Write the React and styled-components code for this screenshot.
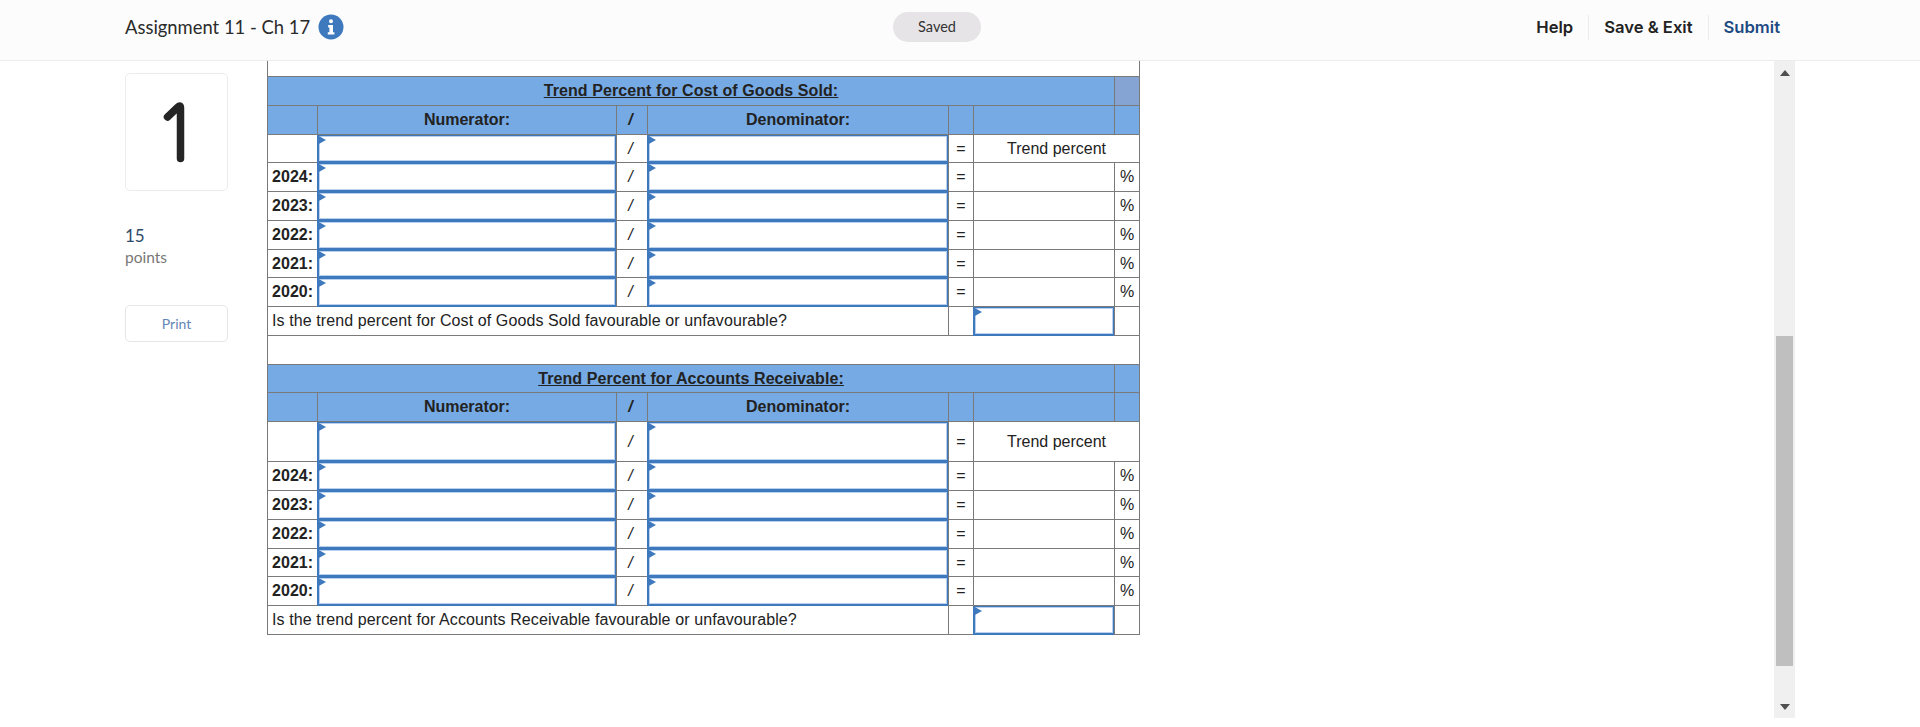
import styled, { createGlobalStyle } from 'styled-components';

const GlobalStyle = createGlobalStyle`
  html, body {
    margin: 0;
    height: 100%;
    background: #fff;
    overflow: hidden;
  }
`;

const Page = styled.div`
  height: 727px;
  display: flex;
  flex-direction: column;
  font-family: Lato, "Open Sans", sans-serif;
  color: #252525;
`;

const Header = styled.header`
  height: 61px;
  box-sizing: border-box;
  flex: none;
  display: flex;
  align-items: center;
  padding: 0 140px 6px 125px;
  background: #fcfcfc;
  border-bottom: 1px solid #ececec;
`;

const TitleGroup = styled.div`
  width: 768px;
  flex: none;
  display: flex;
  align-items: center;
`;

const Actions = styled.nav`
  flex: 1;
  display: flex;
  align-items: center;
  justify-content: flex-end;
`;

const Title = styled.h1`
  margin: 0 8px 0 0;
  font-size: 18.4px;
  font-weight: 400;
  color: #2b2b2b;
`;

const SavedPill = styled.div`
  width: 88px;
  height: 30px;
  border-radius: 15px;
  background: #e6e4e6;
  font-size: 14.5px;
  line-height: 30px;
  text-align: center;
  color: #333;
`;

const HeaderLink = styled.a`
  padding: 0 ${(p) => (p.$primary ? 0 : 15)}px 0 15px;
  height: 25px;
  line-height: 25px;
  font-family: Inter, Lato, sans-serif;
  font-size: 16.6px;
  font-weight: 600;
  color: ${(p) => (p.$primary ? '#1c4a82' : '#222')};
  border-right: ${(p) => (p.$primary ? 'none' : '1px solid #ececec')};
`;

const Body = styled.div`
  flex: 1;
  min-height: 0;
  display: flex;
  padding: 0 125px 9px;
`;

const Sidebar = styled.aside`
  width: 103px;
  flex: none;
  margin-right: 39px;
  padding-top: 12px;
`;

const NumberCard = styled.div`
  height: 116px;
  border: 1px solid #ececec;
  border-radius: 5px;
  display: flex;
  align-items: center;
  justify-content: center;
`;

const Points = styled.div`
  margin-top: 34px;
  font-size: 17px;
  line-height: 22px;
  color: #2f4a68;
`;

const PointsLabel = styled.div`
  font-size: 15.5px;
  line-height: 20px;
  color: #777;
`;

const PrintButton = styled.div`
  margin-top: 38px;
  height: 35px;
  line-height: 35px;
  border: 1px solid #e6e6e6;
  border-radius: 5px;
  text-align: center;
  font-size: 14px;
  color: #5f86b4;
`;

const Content = styled.main`
  flex: 1;
  min-width: 0;
  overflow: hidden;
`;

const Sheet = styled.table`
  width: 873px;
  table-layout: fixed;
  border-collapse: collapse;
  font-family: "Liberation Sans", Arial, sans-serif;
  font-size: 16px;
  color: #222;
`;

const Cell = styled.td`
  border: 1px solid #7a7a7a;
  padding: 0;
  height: ${(p) => p.$h || 29}px;
  box-sizing: border-box;
  text-align: ${(p) => p.$align || 'center'};
  font-weight: ${(p) => (p.$bold ? 700 : 400)};
  background: ${(p) => p.$bg || 'transparent'};
  padding-left: ${(p) => p.$pl || 0}px;
  padding-right: ${(p) => p.$pr || 0}px;
  position: relative;
  white-space: nowrap;
`;

const TopGap = styled.td`
  height: 15px;
  padding: 0;
  border-left: 1px solid #7a7a7a;
  border-right: 1px solid #7a7a7a;
  border-bottom: 1px solid #7a7a7a;
`;

const SectionTitle = styled.span`
  font-weight: 700;
  letter-spacing: 0.08px;
  text-decoration: underline;
`;

const Question = styled.span`
  letter-spacing: 0.1px;
`;

const Slash = styled.span`
  font-style: italic;
  padding-right: 3px;
`;

const AnswerBox = styled.div`
  position: absolute;
  inset: 0 0 -1px -1px;
  border-style: solid;
  border-color: #3f79bd;
  border-width: 1px 1px 2px 2px;
  box-shadow: inset 0 0 0 1px #b9d1ee;
  background: #fff;

  &::before {
    content: '';
    position: absolute;
    left: -2px;
    top: -1px;
    border-left: 9px solid #3f79bd;
    border-top: 5.5px solid transparent;
    border-bottom: 5.5px solid transparent;
  }
`;

const ScrollTrack = styled.div`
  width: 21px;
  flex: none;
  margin-left: 634px;
  background: #f0f0f0;
  position: relative;
`;

const ScrollThumb = styled.div`
  position: absolute;
  left: 2px;
  right: 2px;
  top: 275px;
  height: 330px;
  background: #bfbfbf;
`;

const ScrollArrow = styled.svg`
  position: absolute;
  left: 6px;
  ${(p) => (p.$down ? 'bottom: 8px;' : 'top: 9px;')}
`;

const BLUE = '#76aae4';
const YEARS = ['2024', '2023', '2022', '2021', '2020'];

function InfoIcon() {
  return (
    <svg width="26" height="26" viewBox="0 0 26 26">
      <circle cx="13" cy="13" r="12.5" fill="#3f79bd" />
      <path
        d="M13 5.2a2 2 0 1 1 0 4 2 2 0 0 1 0-4zM10.2 11h4.8v7.2h1.4v2.4H9.8v-2.4h1.6v-4.8h-1.2z"
        fill="#fff"
      />
    </svg>
  );
}

function BigOne() {
  return (
    <svg width="30" height="64" viewBox="0 0 30 64">
      <path
        d="M5.5 17 L16 7 Q18.5 4.5 18.5 8 V58.5"
        fill="none"
        stroke="#252525"
        strokeWidth="7.5"
        strokeLinecap="round"
        strokeLinejoin="round"
      />
    </svg>
  );
}

function FormulaRow({ label, percent, h }) {
  return (
    <tr>
      <Cell $h={h} $bold $align="right" $pr={4}>
        {label}
      </Cell>
      <Cell $h={h}>
        <AnswerBox />
      </Cell>
      <Cell $h={h}>
        <Slash>/</Slash>
      </Cell>
      <Cell $h={h}>
        <AnswerBox />
      </Cell>
      <Cell $h={h}>=</Cell>
      {percent ? (
        <>
          <Cell $h={h} />
          <Cell $h={h}>%</Cell>
        </>
      ) : (
        <Cell $h={h} colSpan={2}>
          Trend percent
        </Cell>
      )}
    </tr>
  );
}

function TrendBlock({ title, question, cornerBg, titleH, firstH }) {
  return (
    <>
      <tr>
        <Cell $h={titleH} colSpan={6} $bg={BLUE}>
          <SectionTitle>{title}</SectionTitle>
        </Cell>
        <Cell $h={titleH} $bg={cornerBg || BLUE} />
      </tr>
      <tr>
        <Cell $bg={BLUE} />
        <Cell $bg={BLUE} $bold>
          Numerator:
        </Cell>
        <Cell $bg={BLUE} $bold>
          <Slash>/</Slash>
        </Cell>
        <Cell $bg={BLUE} $bold>
          Denominator:
        </Cell>
        <Cell $bg={BLUE} />
        <Cell $bg={BLUE} />
        <Cell $bg={BLUE} />
      </tr>
      <FormulaRow h={firstH} />
      {YEARS.map((y) => (
        <FormulaRow key={y} label={`${y}:`} percent h={y === '2021' ? 28 : 29} />
      ))}
      <tr>
        <Cell colSpan={4} $align="left" $pl={4}>
          <Question>{question}</Question>
        </Cell>
        <Cell />
        <Cell>
          <AnswerBox />
        </Cell>
        <Cell />
      </tr>
    </>
  );
}

export default function App() {
  return (
    <Page>
      <GlobalStyle />
      <Header>
        <TitleGroup>
          <Title>Assignment 11 - Ch 17</Title>
          <InfoIcon />
        </TitleGroup>
        <SavedPill>Saved</SavedPill>
        <Actions>
          <HeaderLink>Help</HeaderLink>
          <HeaderLink>Save &amp; Exit</HeaderLink>
          <HeaderLink $primary>Submit</HeaderLink>
        </Actions>
      </Header>
      <Body>
        <Sidebar>
          <NumberCard>
            <BigOne />
          </NumberCard>
          <Points>15</Points>
          <PointsLabel>points</PointsLabel>
          <PrintButton>Print</PrintButton>
        </Sidebar>
        <Content>
          <Sheet>
            <colgroup>
              <col style={{ width: 50 }} />
              <col style={{ width: 299 }} />
              <col style={{ width: 31 }} />
              <col style={{ width: 301 }} />
              <col style={{ width: 25 }} />
              <col style={{ width: 141 }} />
              <col style={{ width: 25 }} />
            </colgroup>
            <tbody>
              <tr>
                <TopGap colSpan={7} />
              </tr>
              <TrendBlock
                title="Trend Percent for Cost of Goods Sold:"
                question="Is the trend percent for Cost of Goods Sold favourable or unfavourable?"
                cornerBg="#85a4d3"
                titleH={29}
                firstH={28}
              />
              <tr>
                <Cell colSpan={7} />
              </tr>
              <TrendBlock
                title="Trend Percent for Accounts Receivable:"
                question="Is the trend percent for Accounts Receivable favourable or unfavourable?"
                titleH={28}
                firstH={40}
              />
            </tbody>
          </Sheet>
        </Content>
        <ScrollTrack>
          <ScrollArrow width="10" height="6" viewBox="0 0 10 6">
            <path d="M5 0 L10 6 H0 Z" fill="#505050" />
          </ScrollArrow>
          <ScrollThumb />
          <ScrollArrow $down width="10" height="6" viewBox="0 0 10 6">
            <path d="M0 0 H10 L5 6 Z" fill="#505050" />
          </ScrollArrow>
        </ScrollTrack>
      </Body>
    </Page>
  );
}
